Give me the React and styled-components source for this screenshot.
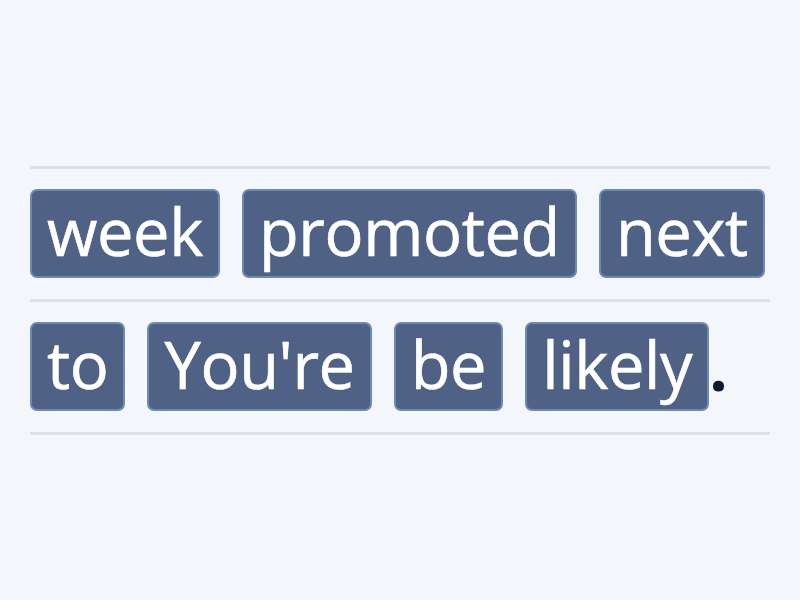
import styled, { createGlobalStyle } from "styled-components";

const GlobalStyle = createGlobalStyle`
  html, body {
    margin: 0;
    padding: 0;
    background: #f3f7fb;
  }
`;

const Page = styled.div`
  width: 800px;
  height: 600px;
  box-sizing: border-box;
  padding: 166px 30px 0;
  font-family: "Open Sans", Lato, sans-serif;
`;

const Sentence = styled.div`
  border-bottom: 3px solid #dde1e6;
`;

const Row = styled.div`
  display: flex;
  align-items: flex-end;
  gap: 22px;
  padding: 20px 0 21px;
  border-top: 3px solid #dde1e6;
`;

const Word = styled.div`
  display: inline-flex;
  align-items: center;
  height: 89px;
  box-sizing: border-box;
  padding: 0 15px 5px;
  background: #4f6285;
  border: 2px solid #6d8bb0;
  border-radius: 7px;
  color: #ffffff;
  font-size: 65px;
  line-height: 1;
  letter-spacing: -0.4px;
  -webkit-text-stroke: 0.6px #ffffff;
  white-space: nowrap;
`;

const Group = styled.div`
  display: flex;
  align-items: flex-end;
`;

const Stop = styled.span`
  color: #0b1a33;
  font-size: 65px;
  line-height: 1;
  font-weight: 700;
  padding-bottom: 12px;
`;

const rows = [
  ["week", "promoted", "next"],
  ["to", "You're", "be", "likely"],
];

export default function App() {
  return (
    <>
      <GlobalStyle />
      <Page>
        <Sentence>
          {rows.map((words, i) => (
            <Row key={i}>
              {words.map((w, j) => {
                const last = i === rows.length - 1 && j === words.length - 1;
                if (last) {
                  return (
                    <Group key={w}>
                      <Word>{w}</Word>
                      <Stop>.</Stop>
                    </Group>
                  );
                }
                return <Word key={w}>{w}</Word>;
              })}
            </Row>
          ))}
        </Sentence>
      </Page>
    </>
  );
}
